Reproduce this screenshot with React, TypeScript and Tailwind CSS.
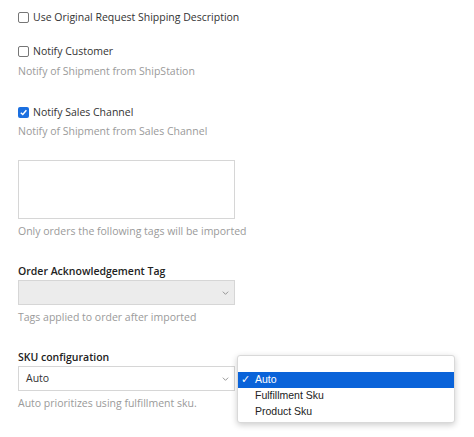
import React from "react";

const font = { fontFamily: '"Open Sans", "Noto Sans", sans-serif' };

function Check({ checked, label }: { checked?: boolean; label: string }) {
  return (
    <label className="flex h-[16px] items-center gap-[4px] text-[10.5px] leading-[16px] text-[#333]">
      {checked ? (
        <span className="flex h-[11px] w-[11px] items-center justify-center rounded-[2px] bg-[#1b6fe0]">
          <svg viewBox="0 0 10 10" className="h-[9px] w-[9px]">
            <path d="M2 5.2 L4.2 7.3 L8.2 2.6" fill="none" stroke="white" strokeWidth="1.6" />
          </svg>
        </span>
      ) : (
        <span className="h-[11px] w-[11px] rounded-[2px] border border-[#767676] bg-white" />
      )}
      {label}
    </label>
  );
}

function Help({ children }: { children: React.ReactNode }) {
  return <div className="h-[16px] text-[10.5px] leading-[16px] text-[#9a9a9a]">{children}</div>;
}

function Label({ children }: { children: React.ReactNode }) {
  return <div className="h-[16px] text-[10.5px] font-semibold leading-[16px] text-[#222]">{children}</div>;
}

function Chevron() {
  return (
    <svg viewBox="0 0 10 6" className="h-[4px] w-[7px]">
      <path d="M1 1 L5 5 L9 1" fill="none" stroke="#888" strokeWidth="1.3" />
    </svg>
  );
}

export default function App() {
  return (
    <div className="relative h-[437px] w-[474px] bg-white px-[18px] pt-[9px]" style={font}>
      <Check label="Use Original Request Shipping Description" />
      <div className="mt-[18px]">
        <Check label="Notify Customer" />
        <div className="mt-[4px]">
          <Help>Notify of Shipment from ShipStation</Help>
        </div>
      </div>
      <div className="mt-[25px]">
        <Check checked label="Notify Sales Channel" />
        <div className="mt-[3px]">
          <Help>Notify of Shipment from Sales Channel</Help>
        </div>
      </div>
      <div className="mt-[21px] h-[59px] w-[217px] border border-[#d6d6d6] bg-white" />
      <div className="mt-[4px]">
        <Help>Only orders the following tags will be imported</Help>
      </div>
      <div className="mt-[24px]">
        <Label>Order Acknowledgement Tag</Label>
      </div>
      <div className="mt-[1px] flex h-[25px] w-[217px] items-center justify-end border border-[#d6d6d6] bg-[#ececec] pr-[5px]">
        <Chevron />
      </div>
      <div className="mt-[4px]">
        <Help>Tags applied to order after imported</Help>
      </div>
      <div className="mt-[24px]">
        <Label>SKU configuration</Label>
      </div>
      <div className="mt-[1px] flex h-[25px] w-[217px] items-center justify-between border border-[#d6d6d6] bg-white pl-[7px] pr-[5px] text-[10.5px] text-[#333]">
        <span>Auto</span>
        <Chevron />
      </div>
      <div className="mt-[4px]">
        <Help>Auto prioritizes using fulfillment sku.</Help>
      </div>

      <div
        className="absolute left-[237px] top-[355px] w-[218px] rounded-[3px] border border-[#d9d9d9] bg-white pb-[2px] pt-[16px] text-[10.5px] text-[#222] shadow-[0_2px_6px_rgba(0,0,0,0.2)]"
        style={{ fontFamily: '"Liberation Sans", Arial, sans-serif' }}
      >
        <div className="flex h-[16px] items-center bg-[#0a63d9] text-white">
          <span className="w-[17px] pl-[3px] text-[11px]" style={{ fontFamily: '"DejaVu Sans", sans-serif' }}>
            ✓
          </span>
          <span>Auto</span>
        </div>
        <div className="flex h-[16px] items-center">
          <span className="w-[17px]" />
          <span>Fulfillment Sku</span>
        </div>
        <div className="flex h-[16px] items-center">
          <span className="w-[17px]" />
          <span>Product Sku</span>
        </div>
      </div>
    </div>
  );
}
